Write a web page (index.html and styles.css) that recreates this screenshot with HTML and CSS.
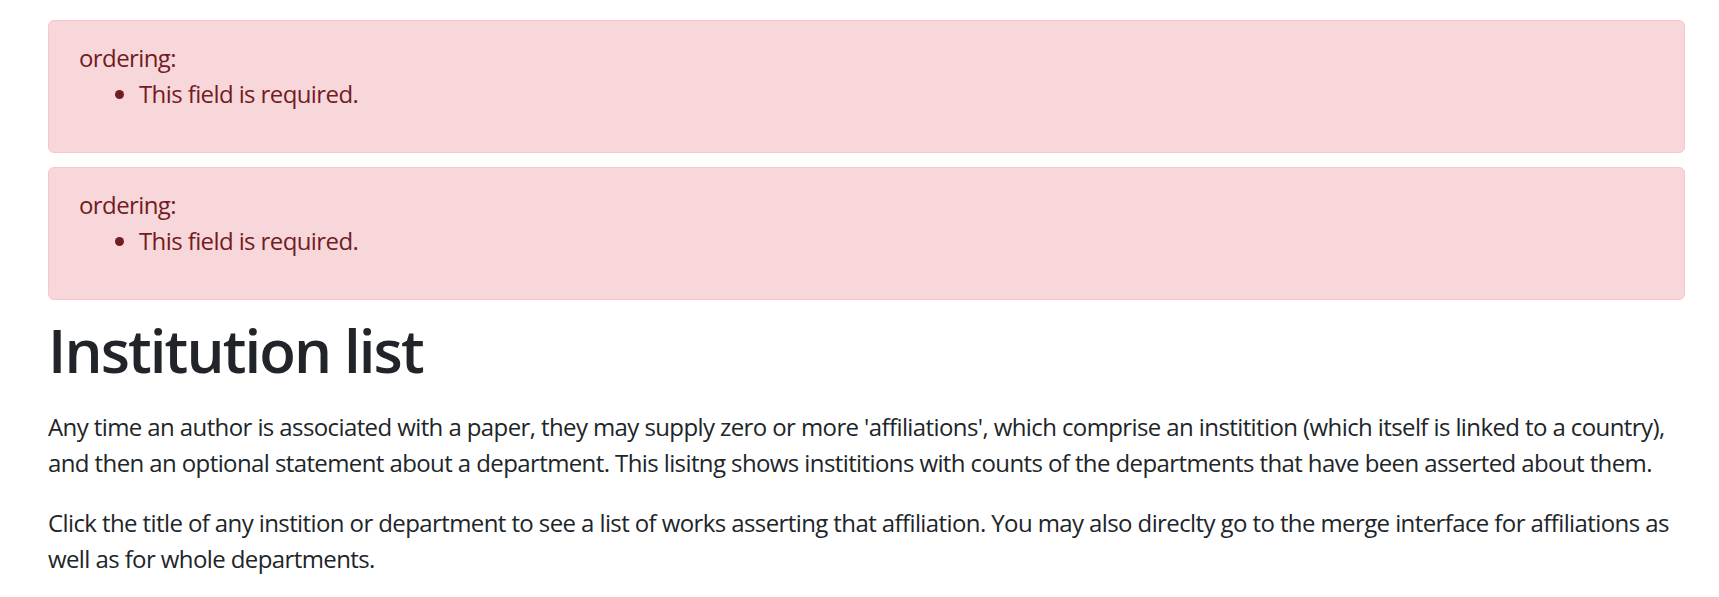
FILE: index.html
```html
<!DOCTYPE html>
<html lang="en">
<head>
<meta charset="utf-8">
<title>Institution list</title>
<link rel="stylesheet" href="styles.css">
</head>
<body>
<main class="container">
  <div class="alert alert-danger">
    ordering:
    <ul class="errorlist">
      <li>This field is required.</li>
    </ul>
  </div>
  <div class="alert alert-danger">
    ordering:
    <ul class="errorlist">
      <li>This field is required.</li>
    </ul>
  </div>
  <h1 class="page-title">Institution list</h1>
  <p class="lead-text">Any time an author is associated with a paper, they may supply zero or more 'affiliations', which comprise an institition (which itself is linked to a country), and then an optional statement about a department. This lisitng shows instititions with counts of the departments that have been asserted about them.</p>
  <p class="lead-text">Click the title of any instition or department to see a list of works asserting that affiliation. You may also direclty go to the merge interface for affiliations as well as for whole departments.</p>
</main>
</body>
</html>
```

FILE: styles.css
```css
html, body {
  margin: 0;
  padding: 0;
  background: #ffffff;
}

body {
  font-family: "Open Sans", "Noto Sans", sans-serif;
  font-size: 24px;
  line-height: 36px;
  color: #212529;
  letter-spacing: -0.6px;
}

.container {
  padding: 20px 34px 0 48px;
}

.alert {
  border: 1px solid #f5c6cb;
  border-radius: 6px;
  background: #f8d7da;
  color: #721c24;
  padding: 19px 30px 16px;
  margin-bottom: 14px;
}

.errorlist {
  margin: 0 0 24px 0;
  padding-left: 60px;
}

.page-title {
  font-size: 60px;
  line-height: 72px;
  font-weight: 600;
  margin: 2px 0 23px 0;
  letter-spacing: -1.9px;
  color: #212529;
}

.lead-text {
  margin: 0 0 24px 0;
}
```
